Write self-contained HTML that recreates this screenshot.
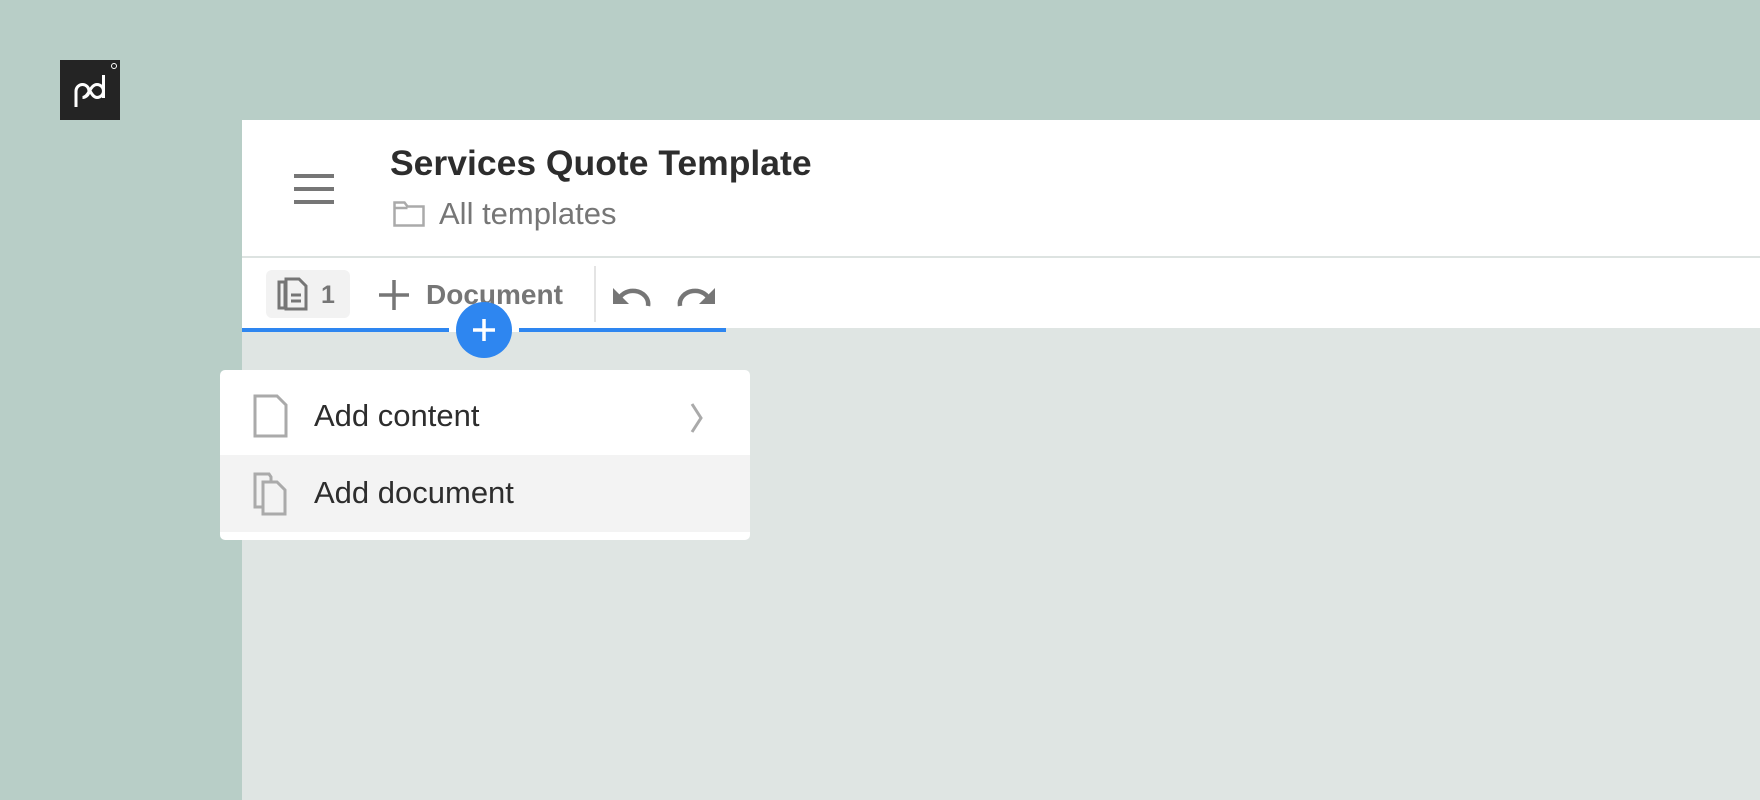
<!DOCTYPE html>
<html><head><meta charset="utf-8"><style>
*{margin:0;padding:0;box-sizing:border-box}
body{width:1760px;height:800px;background:#b8cec7;position:relative;overflow:hidden;font-family:"Liberation Sans",sans-serif}
.abs{position:absolute}
</style></head><body>
<div class="abs" style="left:60px;top:60px;width:60px;height:60px;background:#242424">
<svg width="60" height="60" viewBox="0 0 60 60"><path d="M16 47V31a6.5 6.5 0 1 1 6.5 6.5c3 0 5-3 7-6.5s4-6.5 7.5-6.5a6.5 6.5 0 1 1 0 13c-3 0-5-3-7-6.5M43.5 15v23" fill="none" stroke="#fff" stroke-width="3"/><circle cx="54" cy="6" r="2.5" fill="none" stroke="#fff" stroke-width="1"/></svg></div>
<div class="abs" style="left:242px;top:120px;right:0;height:208px;background:#fff"></div>
<div class="abs" style="left:242px;top:256px;right:0;height:2px;background:#dde3e1"></div>
<div class="abs" style="left:242px;top:328px;right:0;bottom:0;background:#dfe5e3"></div>
<svg class="abs" style="left:294px;top:172px" width="40" height="34"><rect x="0" y="2" width="40" height="4" fill="#767676"/><rect x="0" y="15" width="40" height="4" fill="#767676"/><rect x="0" y="28" width="40" height="4" fill="#767676"/></svg>
<div class="abs" style="left:390px;top:143px;font-size:35.5px;font-weight:bold;color:#2d2d2d">Services Quote Template</div>
<svg class="abs" style="left:393px;top:201px" width="32" height="26"><path d="M1.5 1.5h10l3 4h16v19h-29z M1.5 7h13" fill="none" stroke="#aaa" stroke-width="2.5"/></svg>
<div class="abs" style="left:439px;top:196px;font-size:31px;color:#767676">All templates</div>
<div class="abs" style="left:266px;top:270px;width:84px;height:48px;background:#f2f2f2;border-radius:6px"></div>
<svg class="abs" style="left:277px;top:276px" width="34" height="36"><path d="M2 6h6v26h-6z" fill="none" stroke="#767676" stroke-width="3"/><path d="M9 3h13l7 7v23h-20z" fill="none" stroke="#767676" stroke-width="3"/><path d="M14 19h10M14 25h10" stroke="#767676" stroke-width="3"/></svg>
<div class="abs" style="left:321px;top:281px;font-size:25px;font-weight:bold;color:#767676">1</div>
<svg class="abs" style="left:379px;top:280px" width="30" height="30"><path d="M15 0v30M0 15h30" stroke="#767676" stroke-width="3.5"/></svg>
<div class="abs" style="left:426px;top:279px;font-size:28px;font-weight:bold;color:#767676">Document</div>
<div class="abs" style="left:594px;top:266px;width:2px;height:56px;background:#e4e4e4"></div>
<svg class="abs" style="left:612px;top:282px" width="40" height="26"><path d="M6 20a15 13 0 0 1 30 4" fill="none" stroke="#767676" stroke-width="4.5"/><path d="M1 6v16h16z" fill="#767676"/></svg>
<svg class="abs" style="left:676px;top:282px" width="40" height="26"><path d="M34 20a15 13 0 0 0 -30 4" fill="none" stroke="#767676" stroke-width="4.5"/><path d="M39 6v16h-16z" fill="#767676"/></svg>
<div class="abs" style="left:242px;top:328px;width:484px;height:4px;background:#2e86f0"></div>
<div class="abs" style="left:449px;top:328px;width:70px;height:4px;background:#fff"></div>
<div class="abs" style="left:456px;top:302px;width:56px;height:56px;border-radius:50%;background:#2e86f0"></div>
<svg class="abs" style="left:472px;top:318px" width="24" height="24"><path d="M12 1v22M1 12h22" stroke="#fff" stroke-width="3.5"/></svg>
<div class="abs" style="left:220px;top:370px;width:530px;height:170px;background:#fff;border-radius:5px;overflow:hidden">
<div class="abs" style="left:0;top:85px;width:530px;height:77px;background:#f3f3f3"></div>
</div>
<svg class="abs" style="left:253px;top:394px" width="36" height="44"><path d="M2 2h22l9 9v31h-31z" fill="none" stroke="#aaa" stroke-width="3"/></svg>
<div class="abs" style="left:314px;top:398px;font-size:31px;color:#2d2d2d">Add content</div>
<svg class="abs" style="left:688px;top:402px" width="18" height="32"><path d="M4 2l9 14-9 14" fill="none" stroke="#aaa" stroke-width="3"/></svg>
<svg class="abs" style="left:253px;top:472px" width="36" height="44"><path d="M2 2h14l2 3v30h-16z" fill="none" stroke="#aaa" stroke-width="3"/><path d="M10 10h14l8 8v24h-22z" fill="#f3f3f3" stroke="#aaa" stroke-width="3"/></svg>
<div class="abs" style="left:314px;top:475px;font-size:31px;color:#2d2d2d">Add document</div>
</body></html>
